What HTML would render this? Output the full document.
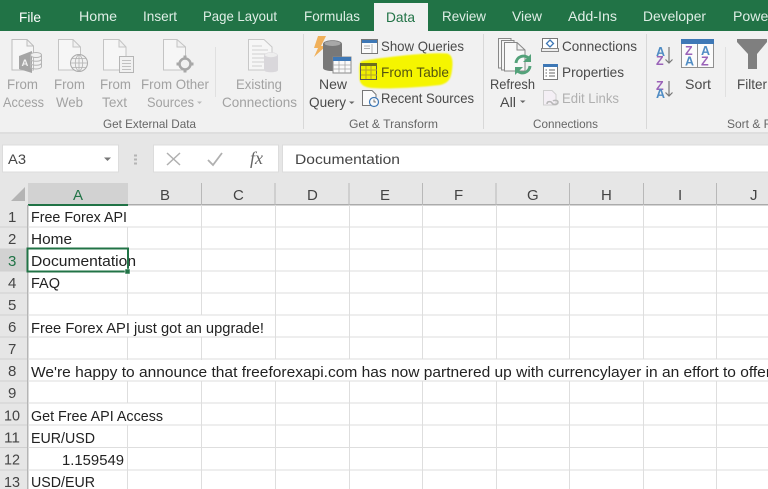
<!DOCTYPE html>
<html><head><meta charset="utf-8">
<style>
html,body{margin:0;padding:0;background:#fff;width:768px;height:489px;overflow:hidden}
svg{display:block;filter:blur(.3px)}
text{font-family:"Liberation Sans",sans-serif;white-space:pre}
.t{font-size:14px;fill:#dfeee6}
.d{font-size:14px;fill:#a2a2a2}
.n{font-size:14px;fill:#4a4a4a}
.g{font-size:12px;fill:#666}
.c{font-size:14.5px;fill:#222}
.h{font-size:15px;fill:#444}
.r{font-size:15px;fill:#444}
</style></head><body>
<svg width="768" height="489" viewBox="0 0 768 489" xmlns="http://www.w3.org/2000/svg">
<defs><filter id="b" x="-5%" y="-20%" width="110%" height="140%"><feGaussianBlur stdDeviation=".8"/></filter></defs>
<rect width="768" height="489" fill="#fff"/>
<rect width="768" height="31" fill="#217346"/>
<rect y="31" width="768" height="102" fill="#f1f1f1"/>
<rect y="133" width="768" height="72" fill="#e6e6e6"/>
<rect y="132" width="768" height="2" fill="#dedede"/>
<rect x="374" y="3" width="54" height="28" fill="#f1f1f1"/>

<!-- tabs -->
<text class="t" x="19" y="22" textLength="22" lengthAdjust="spacingAndGlyphs" style="fill:#fff">File</text>
<text class="t" x="79" y="21" textLength="38" lengthAdjust="spacingAndGlyphs">Home</text>
<text class="t" x="143" y="21" textLength="34" lengthAdjust="spacingAndGlyphs">Insert</text>
<text class="t" x="203" y="21" textLength="74" lengthAdjust="spacingAndGlyphs">Page Layout</text>
<text class="t" x="304" y="21" textLength="56" lengthAdjust="spacingAndGlyphs">Formulas</text>
<text x="386" y="22" font-size="14" fill="#217346" textLength="29" lengthAdjust="spacingAndGlyphs">Data</text>
<text class="t" x="442" y="21" textLength="44" lengthAdjust="spacingAndGlyphs">Review</text>
<text class="t" x="512" y="21" textLength="30" lengthAdjust="spacingAndGlyphs">View</text>
<text class="t" x="568" y="21" textLength="49" lengthAdjust="spacingAndGlyphs">Add-Ins</text>
<text class="t" x="643" y="21" textLength="63" lengthAdjust="spacingAndGlyphs">Developer</text>
<text class="t" x="733" y="21" textLength="40" lengthAdjust="spacingAndGlyphs">Power</text>

<!-- group separators -->
<rect x="303" y="34" width="1" height="95" fill="#d8d8d8"/>
<rect x="483" y="34" width="1" height="95" fill="#d8d8d8"/>
<rect x="646" y="34" width="1" height="95" fill="#d8d8d8"/>
<rect x="215" y="47" width="1" height="50" fill="#e0e0e0"/>
<rect x="725" y="47" width="1" height="50" fill="#e0e0e0"/>

<!-- From Access -->
<path d="M12 39.500H27L33.500 46V70H12Z M27 39.500V46H33.500" fill="#f6f6f6" stroke="#bdbdbd"/>
<path d="M19 56L32 51V73L19 69Z" fill="#a5a5a5"/>
<text x="21.500" y="66" font-size="9.500" font-weight="bold" fill="#f2f2f2">A</text>
<ellipse cx="36" cy="55" rx="5.500" ry="2.500" fill="#f1f1f1" stroke="#b5b5b5"/>
<path d="M30.500 55V66.500C30.500 68 33 69 36 69S41.500 68 41.500 66.500V55M30.500 59C31 62 41 62 41.500 59M30.500 63C31 66 41 66 41.500 63" fill="none" stroke="#b5b5b5"/>
<!-- From Web -->
<path d="M58.500 39.500H73L80.500 47V70H58.500Z M73 39.500V47H80.500" fill="#f6f6f6" stroke="#c4c4c4"/>
<circle cx="79" cy="63" r="8.500" fill="#f1f1f1" stroke="#aaa"/>
<path d="M70.500 63H87.500M72 58.500H86M72 67.500H86M79 54.500V71.500M79 54.500C74 58 74 68 79 71.500M79 54.500C84 58 84 68 79 71.500" fill="none" stroke="#b0b0b0" stroke-width=".8"/>
<!-- From Text -->
<path d="M103.500 39.500H119L126 47V70H103.500Z M119 39.500V47H126" fill="#f6f6f6" stroke="#c4c4c4"/>
<rect x="119.500" y="56.500" width="14" height="16" fill="#f1f1f1" stroke="#b5b5b5"/>
<path d="M122 60.500H131M122 63.500H131M122 66.500H131M122 69.500H131" stroke="#c0c0c0"/>
<!-- From Other -->
<path d="M163.500 39.500H177L185.500 47V70H163.500Z M177 39.500V47H185.500" fill="#f6f6f6" stroke="#c4c4c4"/>
<circle cx="185" cy="64" r="5.500" fill="#f1f1f1" stroke="#a8a8a8" stroke-width="2.500"/>
<path d="M185 55.500V59M185 69V72.500M176.500 64H180M190 64H193.500" stroke="#a8a8a8" stroke-width="3"/>
<!-- Existing Connections -->
<path d="M248.500 39.500H264L272 47V70H248.500Z" fill="#f6f6f6" stroke="#c8c8c8"/>
<path d="M252 46H262M252 50H268M252 54H268M252 58H268M252 62H268M252 66H262" stroke="#d0d0d0"/>
<path d="M264 56C264 51 278 51 278 56V70C278 73 264 73 264 70Z" fill="#d9d7db"/>
<ellipse cx="271" cy="55" rx="6" ry="2.200" fill="#eee"/>

<text class="d" x="7" y="89" textLength="31" lengthAdjust="spacingAndGlyphs">From</text>
<text class="d" x="3" y="107" textLength="41" lengthAdjust="spacingAndGlyphs">Access</text>
<text class="d" x="54" y="89" textLength="31" lengthAdjust="spacingAndGlyphs">From</text>
<text class="d" x="56" y="107" textLength="27" lengthAdjust="spacingAndGlyphs">Web</text>
<text class="d" x="100" y="89" textLength="31" lengthAdjust="spacingAndGlyphs">From</text>
<text class="d" x="102" y="107" textLength="25" lengthAdjust="spacingAndGlyphs">Text</text>
<text class="d" x="141" y="89" textLength="68" lengthAdjust="spacingAndGlyphs">From Other</text>
<text class="d" x="147" y="107" textLength="47" lengthAdjust="spacingAndGlyphs">Sources</text>
<path d="M197 101.500h5l-2.500 2.500z" fill="#bbb"/>
<text class="d" x="236" y="89" textLength="46" lengthAdjust="spacingAndGlyphs">Existing</text>
<text class="d" x="222" y="107" textLength="75" lengthAdjust="spacingAndGlyphs">Connections</text>
<text class="g" x="103" y="128" textLength="93" lengthAdjust="spacingAndGlyphs">Get External Data</text>

<!-- New Query -->
<path d="M318 36H326L321 46H326L314 57L318 48H314Z" fill="#f0b05a"/>
<path d="M323 44C323 39 342 39 342 44V68C342 72 323 72 323 68Z" fill="#787878"/>
<ellipse cx="332.500" cy="43.500" rx="8" ry="2.500" fill="#a8a8a8"/>
<rect x="333" y="57" width="18" height="16" fill="#fafafa" stroke="#8a8a8a"/>
<rect x="333" y="57" width="18" height="4" fill="#3e78b6"/>
<path d="M339 61V73M345 61V73M333 65H351M333 69H351" stroke="#a8a8a8" stroke-width=".8"/>
<text class="n" x="319" y="89" textLength="28" lengthAdjust="spacingAndGlyphs">New</text>
<text class="n" x="309" y="107" textLength="37" lengthAdjust="spacingAndGlyphs">Query</text>
<path d="M349 101.500h5.500l-2.750 2.500z" fill="#666"/>

<!-- Show Queries -->
<rect x="361.500" y="39.500" width="16" height="14" fill="#fbfbfb" stroke="#777"/>
<rect x="362" y="40" width="15" height="3" fill="#3e78b6"/>
<path d="M372 44V53M364 46H370M364 48.500H370" stroke="#b0b0b0"/>
<text class="n" x="381" y="51" textLength="83" lengthAdjust="spacingAndGlyphs">Show Queries</text>

<!-- Yellow highlight -->
<path d="M362 61C385 57 430 52 447 53.500C453 55 453 62 452 70C451 78 449 83 440 85C415 88 385 89 372 88C361 87 359 82 359.500 75C359 68 359 62 362 61Z" fill="#f5f500" filter="url(#b)"/>
<rect x="360.500" y="63.500" width="16" height="16" fill="#f0f000" stroke="#555"/>
<rect x="361" y="63" width="16" height="3" fill="#6e6e1e"/>
<path d="M366 66V79M371 66V79M361 70H377M361 75H377" stroke="#b5a52a"/>
<text class="n" x="381" y="77" textLength="68" lengthAdjust="spacingAndGlyphs" style="fill:#545410">From Table</text>

<!-- Recent Sources -->
<path d="M362.500 90.500H372L376 94.500V105.500H362.500Z" fill="#fbfbfb" stroke="#777"/>
<circle cx="374" cy="102" r="4.500" fill="#fbfbfb" stroke="#3e78b6" stroke-width="1.200"/>
<path d="M374 99.500V102H376" fill="none" stroke="#555" stroke-width=".8"/>
<text class="n" x="381" y="103" textLength="93" lengthAdjust="spacingAndGlyphs">Recent Sources</text>
<text class="g" x="349" y="128" textLength="89" lengthAdjust="spacingAndGlyphs">Get &amp; Transform</text>

<!-- Refresh All -->
<path d="M498.500 38.500H511V68H498.500Z" fill="#f5f5f5" stroke="#888"/>
<path d="M501.500 40.500H514V70H501.500Z" fill="#f5f5f5" stroke="#888"/>
<path d="M504.500 42.500H517L525 50V71H504.500Z M517 42.500V50H525" fill="#f9f9f9" stroke="#888"/>
<path d="M516 63A7.500 7.500 0 0 1 529 58.500" fill="none" stroke="#53a27a" stroke-width="3"/>
<path d="M531 54V62H523Z" fill="#53a27a"/>
<path d="M530 66A7.500 7.500 0 0 1 517 70.500" fill="none" stroke="#53a27a" stroke-width="3"/>
<path d="M515 75V67H523Z" fill="#53a27a"/>
<text class="n" x="490" y="89" textLength="45" lengthAdjust="spacingAndGlyphs">Refresh</text>
<text class="n" x="500" y="107" textLength="16" lengthAdjust="spacingAndGlyphs">All</text>
<path d="M520 100.500h5.500l-2.750 2.500z" fill="#666"/>

<!-- Connections -->
<rect x="542.500" y="38.500" width="15" height="10" fill="#fff" stroke="#777"/>
<path d="M541.500 48.500H558.500V51.500H541.500Z" fill="#eee" stroke="#888"/>
<path d="M550 40L553.500 43.500L550 47L546.500 43.500Z" fill="none" stroke="#3e78b6" stroke-width="1.300"/>
<text class="n" x="562" y="51" textLength="75" lengthAdjust="spacingAndGlyphs">Connections</text>
<!-- Properties -->
<rect x="543.500" y="64.500" width="14" height="15" fill="#fff" stroke="#777"/>
<rect x="543" y="64" width="15" height="3" fill="#3e78b6"/>
<path d="M549 70H555M549 73H555M549 76H555M545.500 70H547M545.500 73H547M545.500 76H547" stroke="#666"/>
<text class="n" x="562" y="77" textLength="62" lengthAdjust="spacingAndGlyphs">Properties</text>
<!-- Edit Links -->
<path d="M543.500 90.500H552L556 94.500V105H543.500Z" fill="#f4eff5" stroke="#cfcfcf"/>
<path d="M547 104C547 101 551 101 552 103M552 103C553 105 558 105 558 102C558 100 554 100 553 101" fill="none" stroke="#b8b8b8" stroke-width="1.500"/>
<text class="d" x="562" y="103" textLength="57" lengthAdjust="spacingAndGlyphs" style="fill:#b0b0b0">Edit Links</text>
<text class="g" x="533" y="128" textLength="65" lengthAdjust="spacingAndGlyphs">Connections</text>

<!-- Sort -->
<text x="656" y="56" font-size="12.500" font-weight="bold" fill="#4f8cc4">A</text>
<text x="656" y="65" font-size="12.500" font-weight="bold" fill="#9a62b8">Z</text>
<path d="M669 47V63M665.500 59.500L669 63L672.500 59.500" fill="none" stroke="#777" stroke-width="1.200"/>
<text x="656" y="90" font-size="12.500" font-weight="bold" fill="#9a62b8">Z</text>
<text x="656" y="98" font-size="12.500" font-weight="bold" fill="#4f8cc4">A</text>
<path d="M669 81V96M665.500 92.500L669 96L672.500 92.500" fill="none" stroke="#777" stroke-width="1.200"/>
<rect x="681.500" y="40.500" width="32" height="27" fill="#fbfbfb" stroke="#909090"/>
<rect x="681" y="39" width="33" height="5" fill="#3e78b6"/>
<rect x="697" y="44" width="1" height="23" fill="#909090"/>
<text x="685" y="55" font-size="12.500" font-weight="bold" fill="#9a62b8">Z</text>
<text x="685" y="65.500" font-size="12.500" font-weight="bold" fill="#4f8cc4">A</text>
<text x="701" y="55" font-size="12.500" font-weight="bold" fill="#4f8cc4">A</text>
<text x="701" y="65.500" font-size="12.500" font-weight="bold" fill="#9a62b8">Z</text>
<text class="n" x="685" y="89" textLength="26" lengthAdjust="spacingAndGlyphs">Sort</text>
<!-- Filter -->
<path d="M737 39H767V42L757 54V69H748V54L737 42Z" fill="#7f7f7f"/>
<text class="n" x="737" y="89" textLength="30" lengthAdjust="spacingAndGlyphs">Filter</text>
<text class="g" x="727" y="128" textLength="44" lengthAdjust="spacingAndGlyphs">Sort &amp; F</text>

<!-- Formula bar -->
<rect x="2.500" y="145" width="116" height="27" fill="#fff" stroke="#dcdcdc"/>
<text x="8" y="164" font-size="14" fill="#444" textLength="18" lengthAdjust="spacingAndGlyphs">A3</text>
<path d="M104 157.500h7l-3.500 3.500z" fill="#777"/>
<path d="M134 154.500h3v2h-3zM134 158.500h3v2h-3zM134 162.500h3v2h-3z" fill="#b4b4b4"/>
<rect x="153.500" y="145" width="125" height="27" fill="#fff" stroke="#dcdcdc"/>
<path d="M167 153L180 165M180 153L167 165" stroke="#b0b0b0" stroke-width="1.500" fill="none"/>
<path d="M208 160L213 165L222 153" stroke="#b0b0b0" stroke-width="1.800" fill="none"/>
<text x="250" y="164" font-size="18" font-style="italic" fill="#666" style="font-family:'Liberation Serif',serif">fx</text>
<rect x="282.500" y="145" width="490" height="27" fill="#fff" stroke="#dcdcdc"/>
<text x="295" y="164" font-size="14" fill="#444" textLength="105" lengthAdjust="spacingAndGlyphs">Documentation</text>

<!-- Column headers -->
<rect x="28" y="183" width="100" height="22" fill="#d2d2d2"/>
<rect x="28" y="204" width="100" height="2" fill="#217346"/>
<rect x="128" y="204" width="640" height="1.500" fill="#ababab"/>
<path d="M25 187V201H11Z" fill="#b4b4b4"/>
<path d="M201.500 183V205M275 183V205M349 183V205M422.500 183V205M496 183V205M569.500 183V205M643.500 183V205M716.500 183V205" stroke="#b8b8b8"/>
<text class="h" x="73" y="200" style="fill:#217346">A</text>
<text class="h" x="160" y="200">B</text>
<text class="h" x="233" y="200">C</text>
<text class="h" x="307" y="200">D</text>
<text class="h" x="380" y="200">E</text>
<text class="h" x="454" y="200">F</text>
<text class="h" x="527" y="200">G</text>
<text class="h" x="601" y="200">H</text>
<text class="h" x="678" y="200">I</text>
<text class="h" x="750" y="200">J</text>

<!-- Row header -->
<rect x="0" y="205" width="28" height="284" fill="#e6e6e6"/>
<rect x="27" y="205" width="1.500" height="284" fill="#b5b5b5"/>
<rect x="0" y="249" width="28" height="22" fill="#d2d2d2"/>
<path d="M0 227H27M0 249H27M0 271H27M0 293H27M0 315H27M0 337H27M0 359H27M0 381H27M0 403H27M0 425H27M0 447.500H27M0 470H27" stroke="#d0d0d0"/>
<text class="r" x="8" y="222">1</text>
<text class="r" x="8" y="244">2</text>
<text class="r" x="8" y="266" style="fill:#217346">3</text>
<text class="r" x="8" y="288">4</text>
<text class="r" x="8" y="310">5</text>
<text class="r" x="8" y="332">6</text>
<text class="r" x="8" y="354">7</text>
<text class="r" x="8" y="376">8</text>
<text class="r" x="8" y="398">9</text>
<text class="r" x="4" y="420.500" textLength="16" lengthAdjust="spacingAndGlyphs">10</text>
<text class="r" x="4" y="442.500" textLength="16" lengthAdjust="spacingAndGlyphs">11</text>
<text class="r" x="4" y="464.500" textLength="16" lengthAdjust="spacingAndGlyphs">12</text>
<text class="r" x="4" y="487" textLength="16" lengthAdjust="spacingAndGlyphs">13</text>

<!-- Grid -->
<path d="M28 227H768M28 249H768M28 271H768M28 293H768M28 315H768M28 337H768M28 359H768M28 381H768M28 403H768M28 425H768M28 447.500H768M28 470H768" stroke="#dedede"/>
<path d="M201.500 205V315M275.500 205V359M349.500 205V359M422.500 205V359M496.500 205V359M569.500 205V359M643.500 205V359M716.500 205V359
M127.500 227V315M127.500 337V403M127.500 425V489
M201.500 337V489M275.500 381V489M349.500 381V489M422.500 381V489M496.500 381V489M569.500 381V489M643.500 381V489M716.500 381V489" stroke="#dedede"/>
<rect x="126" y="360" width="642" height="20.500" fill="#fff"/>

<text class="c" x="31" y="222" textLength="96" lengthAdjust="spacingAndGlyphs">Free Forex API</text>
<text class="c" x="31" y="244" textLength="41" lengthAdjust="spacingAndGlyphs">Home</text>
<text class="c" x="31" y="266" textLength="105" lengthAdjust="spacingAndGlyphs">Documentation</text>
<text class="c" x="31" y="288" textLength="29" lengthAdjust="spacingAndGlyphs">FAQ</text>
<text class="c" x="31" y="333" textLength="233" lengthAdjust="spacingAndGlyphs">Free Forex API just got an upgrade!</text>
<text class="c" x="31" y="377" textLength="740" lengthAdjust="spacingAndGlyphs">We're happy to announce that freeforexapi.com has now partnered up with currencylayer in an effort to offer</text>
<text class="c" x="31" y="421" textLength="132" lengthAdjust="spacingAndGlyphs">Get Free API Access</text>
<text class="c" x="31" y="443" textLength="64" lengthAdjust="spacingAndGlyphs">EUR/USD</text>
<text class="c" x="62" y="465" textLength="62" lengthAdjust="spacingAndGlyphs">1.159549</text>
<text class="c" x="31" y="487" textLength="64" lengthAdjust="spacingAndGlyphs">USD/EUR</text>

<!-- selection -->
<rect x="27.500" y="248.500" width="100.500" height="23" fill="none" stroke="#217346" stroke-width="2"/>
<rect x="125" y="269" width="5" height="5" fill="#217346" stroke="#fff" stroke-width=".5"/>
</svg>
</body></html>
